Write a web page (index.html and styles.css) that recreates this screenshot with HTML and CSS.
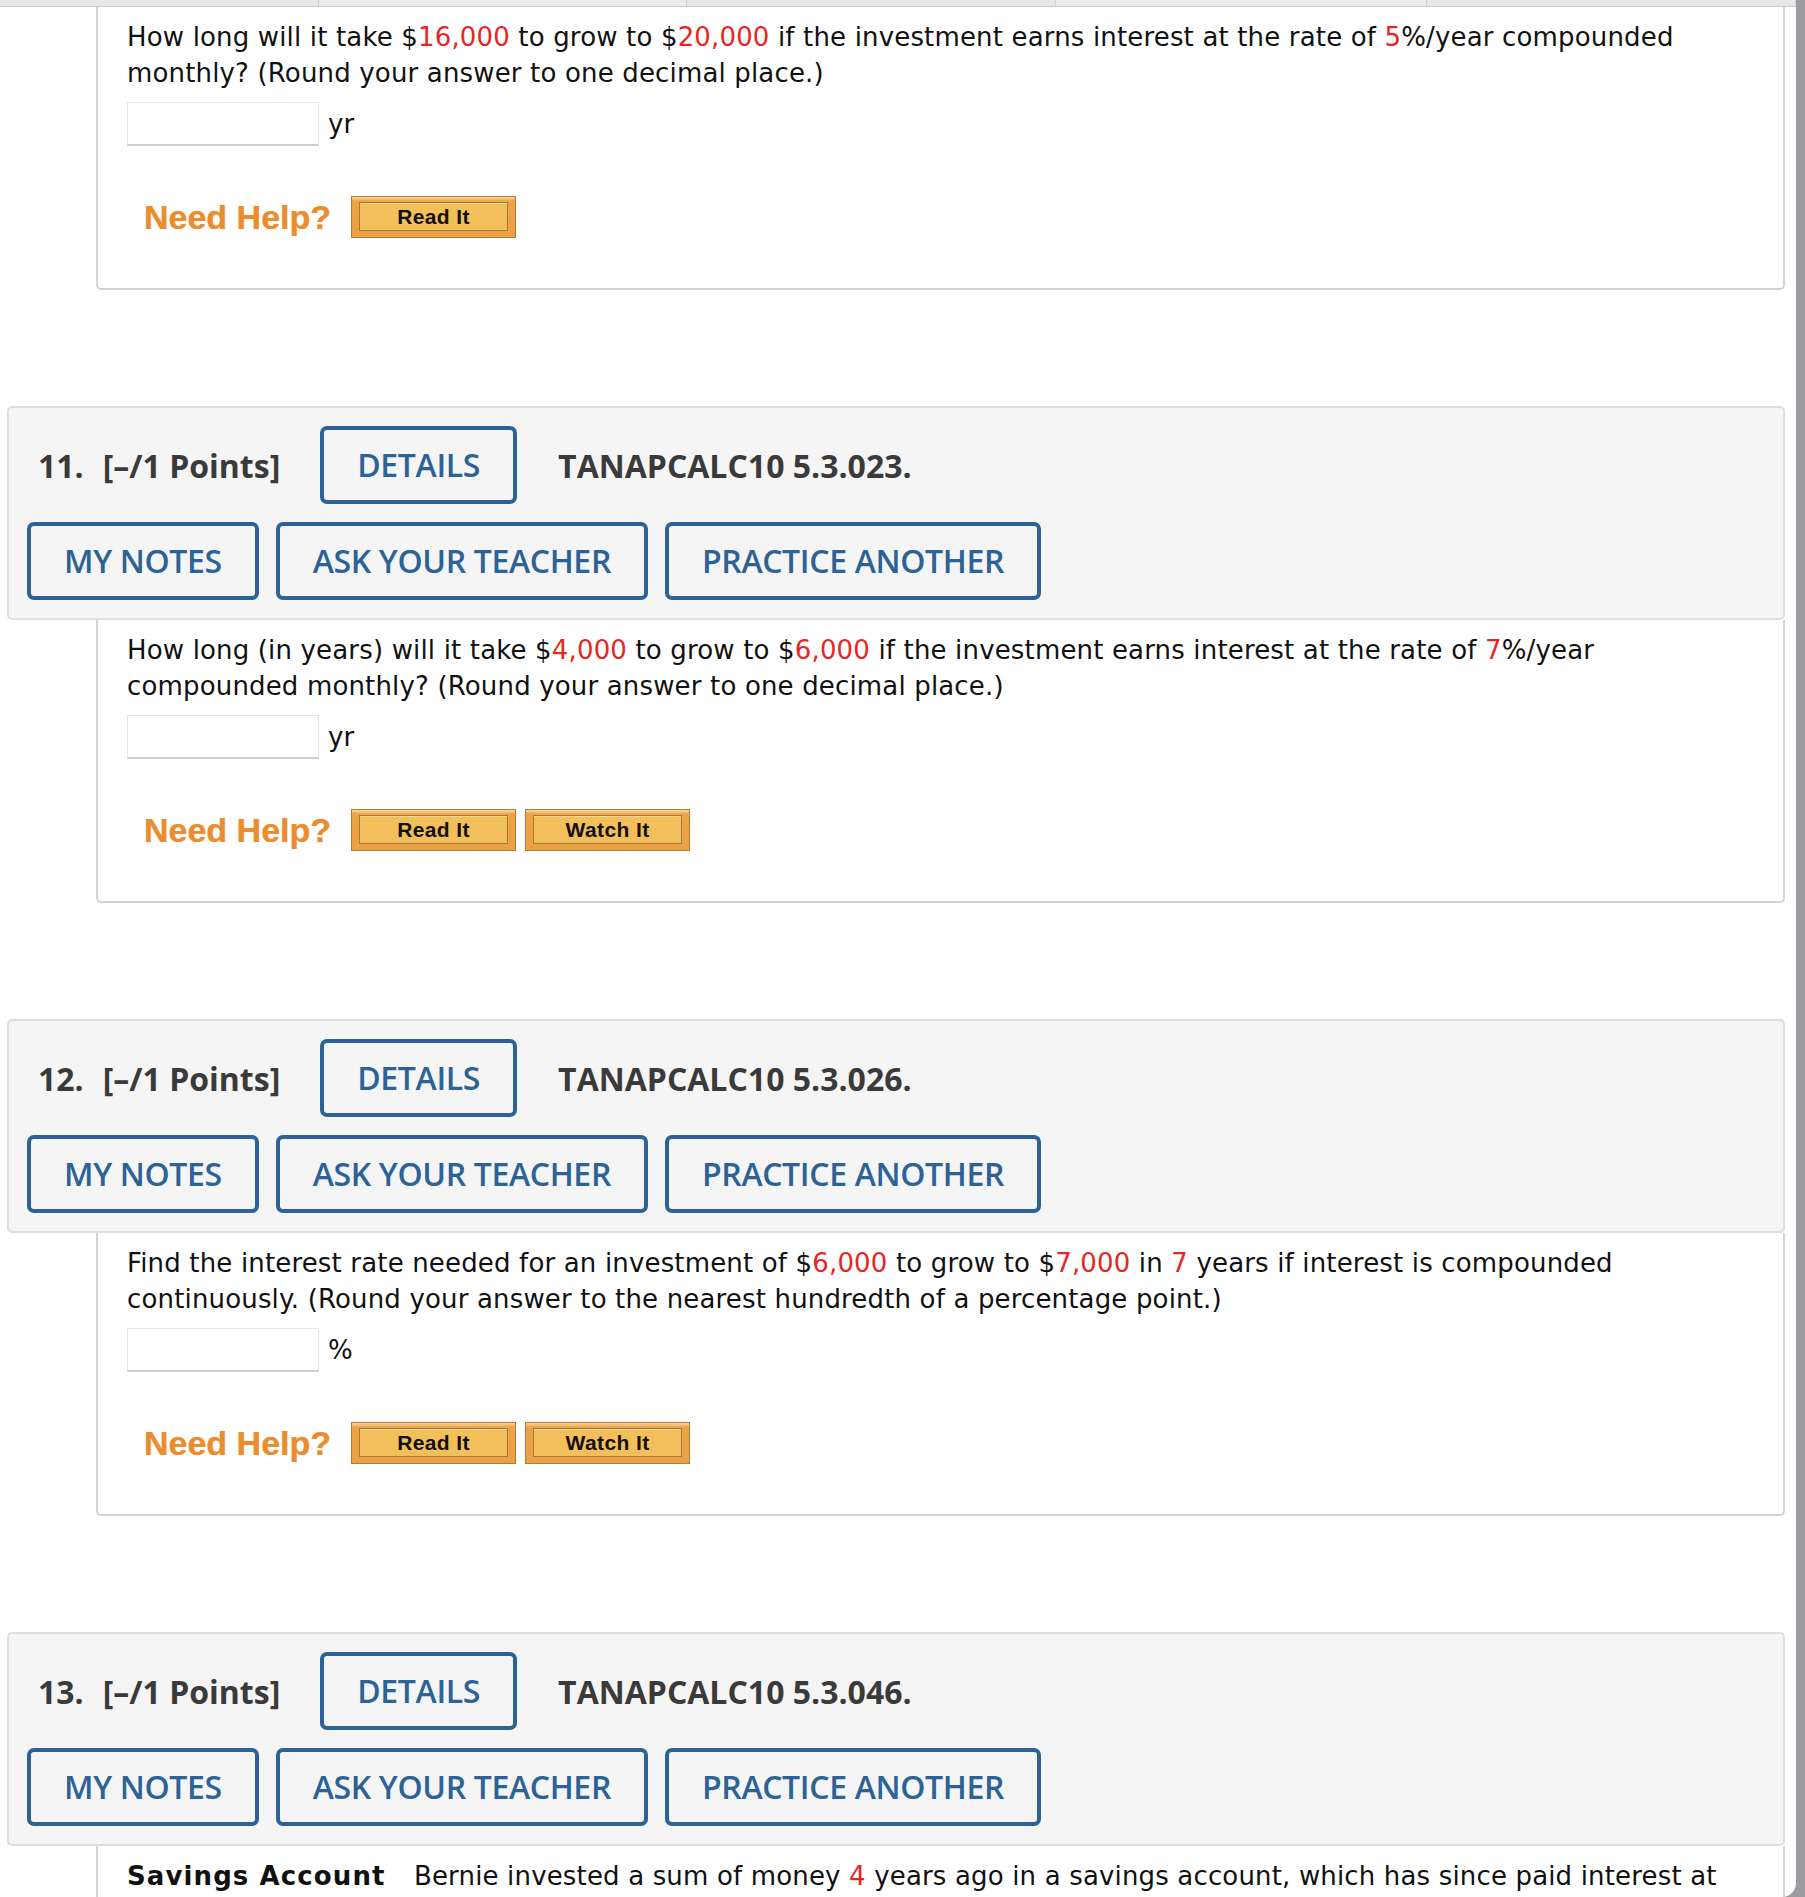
FILE: index.html
```html
<!DOCTYPE html>
<html lang="en">
<head>
<meta charset="utf-8">
<title>Assignment – Section 5.3</title>
<link rel="stylesheet" href="styles.css">
</head>
<body>
<div class="window">
  <main class="page">
    <div class="table-tail">
      <span></span><span></span><span></span><span></span><span></span>
    </div>

    <section class="question">
      <div class="q-body">
        <p class="prompt">How long will it take $<span class="val">16,000</span> to grow to $<span class="val">20,000</span> if the investment earns interest at the rate of <span class="val">5</span>%/year compounded monthly? (Round your answer to one decimal place.)</p>
        <div class="answer"><input class="answer-input" type="text" aria-label="Answer"><span class="unit">yr</span></div>
        <div class="help">
          <span class="help-label">Need Help?</span>
          <button class="help-btn" type="button"><span>Read It</span></button>
        </div>
      </div>
    </section>

    <section class="question">
      <div class="q-head">
        <div class="q-row">
          <span class="q-num">11.</span>
          <span class="q-points">[–/1 Points]</span>
          <button class="q-btn details" type="button">DETAILS</button>
          <span class="q-code">TANAPCALC10 5.3.023.</span>
        </div>
        <div class="q-row q-actions">
          <button class="q-btn" type="button">MY NOTES</button>
          <button class="q-btn" type="button">ASK YOUR TEACHER</button>
          <button class="q-btn" type="button">PRACTICE ANOTHER</button>
        </div>
      </div>
      <div class="q-body">
        <p class="prompt">How long (in years) will it take $<span class="val">4,000</span> to grow to $<span class="val">6,000</span> if the investment earns interest at the rate of <span class="val">7</span>%/year compounded monthly? (Round your answer to one decimal place.)</p>
        <div class="answer"><input class="answer-input" type="text" aria-label="Answer"><span class="unit">yr</span></div>
        <div class="help">
          <span class="help-label">Need Help?</span>
          <button class="help-btn" type="button"><span>Read It</span></button>
          <button class="help-btn" type="button"><span>Watch It</span></button>
        </div>
      </div>
    </section>

    <section class="question">
      <div class="q-head">
        <div class="q-row">
          <span class="q-num">12.</span>
          <span class="q-points">[–/1 Points]</span>
          <button class="q-btn details" type="button">DETAILS</button>
          <span class="q-code">TANAPCALC10 5.3.026.</span>
        </div>
        <div class="q-row q-actions">
          <button class="q-btn" type="button">MY NOTES</button>
          <button class="q-btn" type="button">ASK YOUR TEACHER</button>
          <button class="q-btn" type="button">PRACTICE ANOTHER</button>
        </div>
      </div>
      <div class="q-body">
        <p class="prompt">Find the interest rate needed for an investment of $<span class="val">6,000</span> to grow to $<span class="val">7,000</span> in <span class="val">7</span> years if interest is compounded continuously. (Round your answer to the nearest hundredth of a percentage point.)</p>
        <div class="answer"><input class="answer-input" type="text" aria-label="Answer"><span class="unit">%</span></div>
        <div class="help">
          <span class="help-label">Need Help?</span>
          <button class="help-btn" type="button"><span>Read It</span></button>
          <button class="help-btn" type="button"><span>Watch It</span></button>
        </div>
      </div>
    </section>

    <section class="question">
      <div class="q-head">
        <div class="q-row">
          <span class="q-num">13.</span>
          <span class="q-points">[–/1 Points]</span>
          <button class="q-btn details" type="button">DETAILS</button>
          <span class="q-code">TANAPCALC10 5.3.046.</span>
        </div>
        <div class="q-row q-actions">
          <button class="q-btn" type="button">MY NOTES</button>
          <button class="q-btn" type="button">ASK YOUR TEACHER</button>
          <button class="q-btn" type="button">PRACTICE ANOTHER</button>
        </div>
      </div>
      <div class="q-body">
        <p class="prompt"><b class="lead">Savings Account</b> Bernie invested a sum of money <span class="val">4</span> years ago in a savings account, which has since paid interest at the rate of <span class="val">6</span>%/year compounded quarterly. How much did he originally invest? (Round your answer to the nearest cent.)</p>
      </div>
    </section>
  </main>
</div>
</body>
</html>
```

FILE: styles.css
```css
* {
  box-sizing: border-box;
}

html,
body {
  margin: 0;
  padding: 0;
}

body {
  background: #9b9ba0;
  font-family: "DejaVu Sans", Verdana, sans-serif;
  color: #111;
}

/* browser window: white page with a rounded lower-right corner and a dark frame edge */
.window {
  height: 1897px;
  padding-right: 9px;
  overflow: hidden;
}

.page {
  height: 100%;
  background: #fff;
  border-bottom-right-radius: 14px;
  overflow: hidden;
}

/* bottom edge of the previous answer table */
.table-tail {
  display: grid;
  grid-template-columns: 319px 368px 369px 371px 1fr;
  height: 7px;
  border-bottom: 1px solid #cacaca;
}

.table-tail span {
  background: #e8e8e8;
  border-right: 1px solid #d4d4d4;
}

.table-tail span:nth-child(even) {
  background: #ebebeb;
}

/* question blocks */
.question + .question {
  margin-top: 116px;
}

.q-head {
  margin: 0 11px 0 7px;
  padding: 18px;
  background: #f5f5f5;
  border: 2px solid #dedede;
  border-radius: 5px;
}

.q-row {
  display: flex;
  align-items: center;
  height: 78px;
}

.q-row + .q-row {
  margin-top: 18px;
}

.q-num,
.q-points,
.q-code {
  font-family: "Open Sans", "Noto Sans", sans-serif;
  font-weight: 700;
  font-size: 32px;
  color: #3a3a3a;
}

.q-num {
  margin-left: 11px;
}

.q-points {
  margin-left: 19px;
}

.q-code {
  margin-left: 41px;
}

.q-btn {
  height: 78px;
  margin: 0;
  padding: 0 33px;
  background: transparent;
  border: 4px solid #2c6295;
  border-radius: 7px;
  color: #2c6295;
  font-family: "Open Sans", "Noto Sans", sans-serif;
  font-weight: 600;
  font-size: 32px;
  letter-spacing: -0.35px;
  line-height: 1;
  cursor: pointer;
}

.q-btn.details {
  margin-left: 40px;
}

.q-actions {
  gap: 17px;
}

.q-body {
  margin: 0 11px 0 96px;
  padding: 12px 44px 50px 29px;
  border: 2px solid #d3d3d3;
  border-top: 0;
  border-radius: 0 0 5px 5px;
}

.prompt {
  margin: 0;
  font-size: 26px;
  line-height: 36px;
  letter-spacing: 0.16px;
}

.val {
  color: #e8261f;
}

.lead {
  margin-right: 20px;
  letter-spacing: 1.1px;
}

.answer {
  display: flex;
  align-items: center;
  margin-top: 11px;
}

.answer-input {
  width: 192px;
  height: 44px;
  margin: 0;
  padding: 0 8px;
  background: #fff;
  border: 1px solid #e4e4e4;
  border-bottom: 2px solid #cecece;
  border-radius: 0;
  font: inherit;
  font-size: 24px;
}

.unit {
  margin-left: 9px;
  font-size: 26px;
  line-height: 36px;
}

/* help links */
.help {
  display: flex;
  align-items: center;
  height: 42px;
  margin-top: 50px;
}

.help-label {
  margin: 0 20px 0 17px;
  font-family: "Liberation Sans", Arial, sans-serif;
  font-weight: 700;
  font-size: 34px;
  color: #ea8d31;
  text-shadow: 0 0 1px rgba(234, 141, 49, 0.7);
}

.help-btn {
  width: 165px;
  height: 42px;
  margin: 0;
  padding: 5px 7px 6px;
  border: 1px solid #b07a3a;
  background: linear-gradient(#f7d9a6 0, #eca445 4px, #eba043 100%);
  cursor: pointer;
}

.help-btn + .help-btn {
  margin-left: 9px;
}

.help-btn span {
  display: flex;
  align-items: center;
  justify-content: center;
  height: 100%;
  border: 1px solid #a27a44;
  background: #f2bf5b;
  box-shadow: inset 0 1px 0 #f8d990;
  font-family: "Liberation Sans", Arial, sans-serif;
  font-weight: 700;
  font-size: 21px;
  letter-spacing: 0.4px;
  color: #141007;
}
```
